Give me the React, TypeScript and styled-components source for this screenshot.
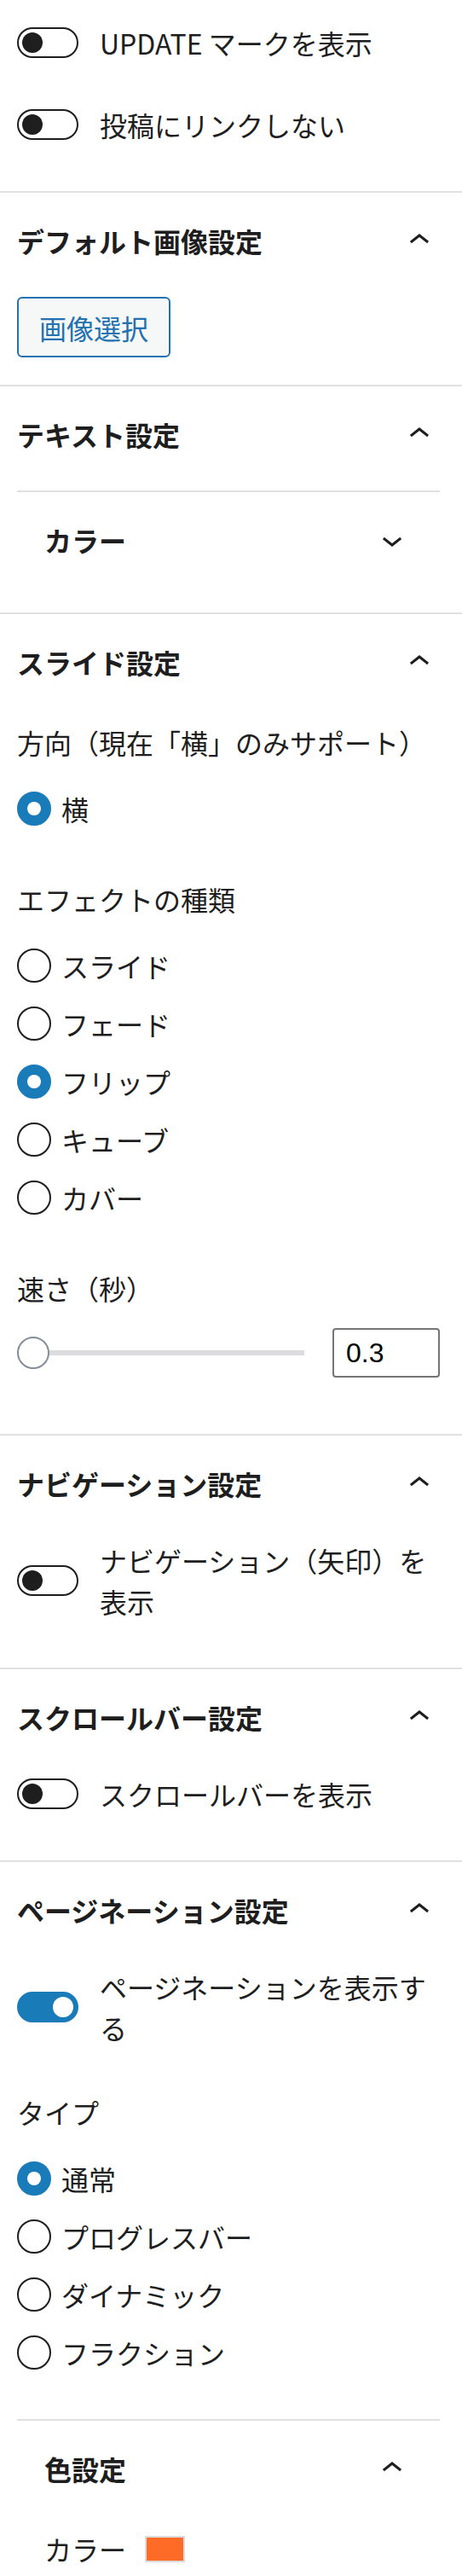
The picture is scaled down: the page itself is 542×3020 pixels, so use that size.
import React from "react";
import styled, { createGlobalStyle } from "styled-components";

const BLUE = "#1a7bb9";
const TEXT = "#1e1e1e";

const GlobalStyle = createGlobalStyle`
  html, body { margin: 0; padding: 0; background: #fff; }
  body {
    font-family: "Noto Sans CJK JP", "Noto Sans", sans-serif;
    color: ${TEXT};
  }
  * { box-sizing: border-box; }
`;

const Sidebar = styled.div`
  width: 542px;
  background: #fff;
  font-size: 32px;
  line-height: 48px;
`;

const TopSection = styled.div`
  display: flex;
  flex-direction: column;
  gap: 48px;
  padding: 26px 26px 54px 20px;
`;

const Panel = styled.section`
  border-top: 2px solid #e0e0e0;
`;

const PanelHeader = styled.div<{ $inner?: boolean }>`
  height: 112px;
  display: flex;
  align-items: center;
  justify-content: space-between;
  padding: ${(p) => (p.$inner ? "0 32px" : "0 26px 0 20px")};
`;

const PanelTitle = styled.h2`
  margin: 0;
  font-size: 32px;
  line-height: 48px;
  font-weight: 700;
  color: ${TEXT};
`;

const PanelContent = styled.div<{ $pb: number }>`
  display: flex;
  flex-direction: column;
  padding: 10px 26px ${(p) => p.$pb}px 20px;
`;

const InnerContent = styled.div`
  padding: 14px 32px 8px 32px;
`;

const Field = styled.div<{ $mt?: number }>`
  display: flex;
  flex-direction: column;
  margin-top: ${(p) => p.$mt ?? 0}px;
`;

const FieldLabel = styled.div`
  margin-top: 4px;
  line-height: 48px;
`;

const ToggleRow = styled.div`
  display: flex;
  align-items: center;
  gap: 25px;
`;

const ToggleTrack = styled.span<{ $on?: boolean }>`
  flex-shrink: 0;
  width: 72px;
  height: 36px;
  border-radius: 18px;
  border: 2px solid ${(p) => (p.$on ? BLUE : TEXT)};
  background: ${(p) => (p.$on ? BLUE : "#fff")};
  display: flex;
  align-items: center;
  justify-content: ${(p) => (p.$on ? "flex-end" : "flex-start")};
  padding: 0 4px;
`;

const ToggleKnob = styled.span<{ $on?: boolean }>`
  width: 24px;
  height: 24px;
  border-radius: 50%;
  background: ${(p) => (p.$on ? "#fff" : TEXT)};
`;

const ToggleText = styled.span`
  flex: 1;
  line-height: 48px;
`;

const RadioList = styled.div`
  display: flex;
  flex-direction: column;
  gap: 20px;
  margin-top: 30px;
`;

const RadioRow = styled.div`
  display: flex;
  align-items: center;
  gap: 12px;
  height: 48px;
`;

const RadioCircle = styled.span<{ $checked?: boolean }>`
  flex-shrink: 0;
  width: 40px;
  height: 40px;
  border-radius: 50%;
  border: 2px solid ${(p) => (p.$checked ? BLUE : TEXT)};
  background: ${(p) => (p.$checked ? BLUE : "#fff")};
  display: flex;
  align-items: center;
  justify-content: center;
`;

const RadioDot = styled.span`
  width: 16px;
  height: 16px;
  border-radius: 50%;
  background: #fff;
`;

const RangeRow = styled.div`
  display: flex;
  align-items: center;
  gap: 33px;
  margin-top: 23px;
`;

const RangeTrack = styled.div`
  flex: 1;
  height: 40px;
  display: flex;
  align-items: center;
  background: linear-gradient(#dcdcde, #dcdcde) center / 100% 6px no-repeat;
`;

const RangeThumb = styled.span`
  width: 38px;
  height: 38px;
  border-radius: 50%;
  border: 2px solid #848e99;
  background: #fff;
`;

const NumberInput = styled.input`
  width: 126px;
  height: 58px;
  border: 2px solid #757575;
  border-radius: 4px;
  padding: 0 14px;
  font-family: "Liberation Sans", Arial, sans-serif;
  font-size: 32px;
  color: #000;
  background: #fff;
  outline: none;
`;

const Button = styled.button`
  align-self: flex-start;
  height: 71px;
  padding: 0 24px;
  border: 2px solid #2271b1;
  border-radius: 6px;
  background: #f6f7f7;
  color: #2271b1;
  font-family: "Noto Sans CJK JP", "Noto Sans", sans-serif;
  font-size: 32px;
  line-height: 1;
  cursor: pointer;
`;

const ColorRow = styled.div`
  display: flex;
  align-items: center;
  gap: 22px;
  height: 48px;
`;

const Swatch = styled.span<{ $color: string }>`
  width: 47px;
  height: 31px;
  border: 2px solid #dcdcdc;
  background: ${(p) => p.$color};
`;

const ChevronUp = () => (
  <svg width="48" height="48" viewBox="0 0 24 24" fill={TEXT} aria-hidden>
    <path d="M6.5 12.4L12 8l5.5 4.4-.9 1.2L12 10l-4.6 3.6-1-1.2z" />
  </svg>
);

const ChevronDown = () => (
  <svg width="48" height="48" viewBox="0 0 24 24" fill={TEXT} aria-hidden>
    <path d="M17.5 11.6L12 16l-5.5-4.4.9-1.2L12 14l4.6-3.6 1 1.2z" />
  </svg>
);

const Toggle = ({ on, label }: { on?: boolean; label: string }) => (
  <ToggleRow>
    <ToggleTrack $on={on}>
      <ToggleKnob $on={on} />
    </ToggleTrack>
    <ToggleText>{label}</ToggleText>
  </ToggleRow>
);

const Radios = ({ options, selected }: { options: string[]; selected: number }) => (
  <RadioList>
    {options.map((o, i) => (
      <RadioRow key={o}>
        <RadioCircle $checked={i === selected}>{i === selected && <RadioDot />}</RadioCircle>
        <span>{o}</span>
      </RadioRow>
    ))}
  </RadioList>
);

const Header = ({ title, inner, open = true }: { title: string; inner?: boolean; open?: boolean }) => (
  <PanelHeader $inner={inner}>
    <PanelTitle>{title}</PanelTitle>
    {open ? <ChevronUp /> : <ChevronDown />}
  </PanelHeader>
);

export default function App() {
  return (
    <>
      <GlobalStyle />
      <Sidebar>
        <TopSection>
          <Toggle label="UPDATE マークを表示" />
          <Toggle label="投稿にリンクしない" />
        </TopSection>

        <Panel>
          <Header title="デフォルト画像設定" />
          <PanelContent $pb={32}>
            <Button>画像選択</Button>
          </PanelContent>
        </Panel>

        <Panel>
          <Header title="テキスト設定" />
          <PanelContent $pb={29}>
            <Panel>
              <Header title="カラー" inner open={false} />
            </Panel>
          </PanelContent>
        </Panel>

        <Panel>
          <Header title="スライド設定" />
          <PanelContent $pb={66}>
            <Field>
              <FieldLabel>方向（現在「横」のみサポート）</FieldLabel>
              <Radios options={["横"]} selected={0} />
            </Field>
            <Field $mt={54}>
              <FieldLabel>エフェクトの種類</FieldLabel>
              <Radios options={["スライド", "フェード", "フリップ", "キューブ", "カバー"]} selected={2} />
            </Field>
            <Field $mt={54}>
              <FieldLabel>速さ（秒）</FieldLabel>
              <RangeRow>
                <RangeTrack>
                  <RangeThumb />
                </RangeTrack>
                <NumberInput type="text" value="0.3" readOnly />
              </RangeRow>
            </Field>
          </PanelContent>
        </Panel>

        <Panel>
          <Header title="ナビゲーション設定" />
          <PanelContent $pb={54}>
            <Toggle label="ナビゲーション（矢印）を表示" />
          </PanelContent>
        </Panel>

        <Panel>
          <Header title="スクロールバー設定" />
          <PanelContent $pb={54}>
            <Toggle label="スクロールバーを表示" />
          </PanelContent>
        </Panel>

        <Panel>
          <Header title="ページネーション設定" />
          <PanelContent $pb={0}>
            <Toggle on label="ページネーションを表示する" />
            <Field $mt={47}>
              <FieldLabel>タイプ</FieldLabel>
              <Radios options={["通常", "プログレスバー", "ダイナミック", "フラクション"]} selected={0} />
            </Field>
            <Field $mt={54}>
              <Panel>
                <Header title="色設定" inner />
                <InnerContent>
                  <ColorRow>
                    <span>カラー</span>
                    <Swatch $color="#fe6b26" />
                  </ColorRow>
                </InnerContent>
              </Panel>
            </Field>
          </PanelContent>
        </Panel>
      </Sidebar>
    </>
  );
}
